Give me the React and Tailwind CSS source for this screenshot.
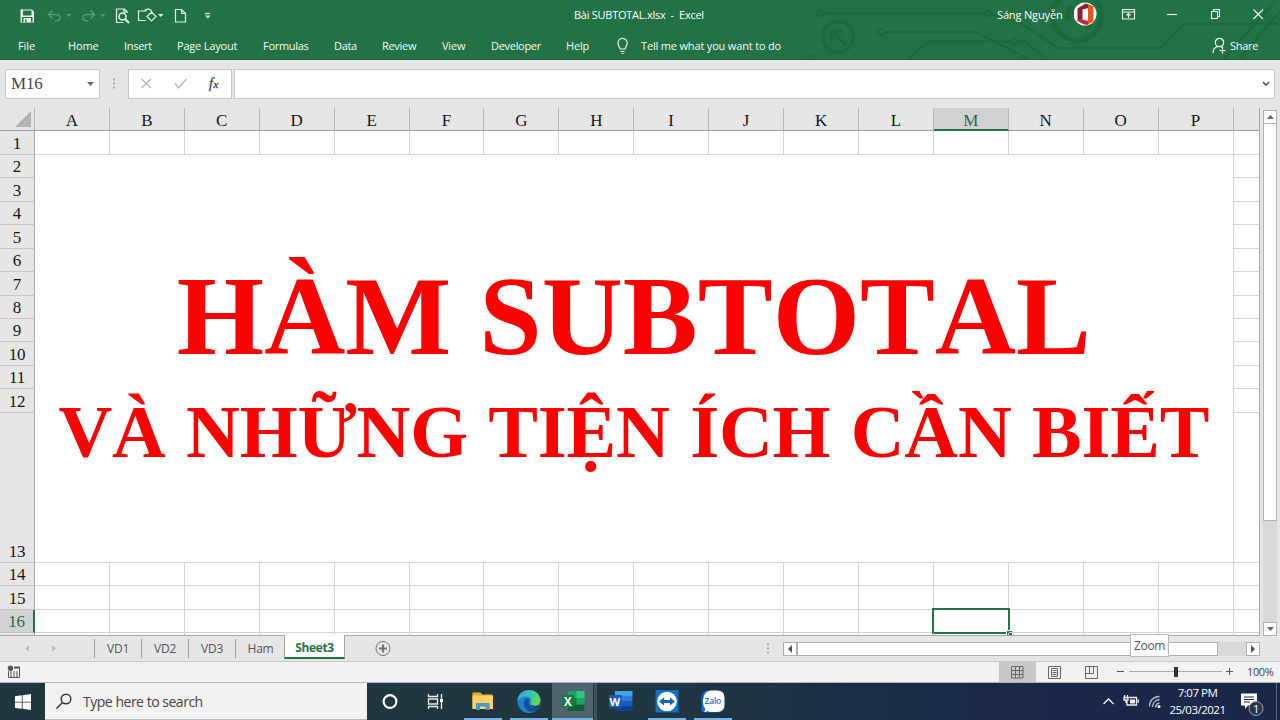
import React from 'react';

const menuTabs = [
  { label: 'File', className: 'w-[50px] tracking-[-0.1px]' },
  { label: 'Home', className: 'w-[56px] tracking-[-0.1px]' },
  { label: 'Insert', className: 'w-[53px] tracking-[-0.3px]' },
  { label: 'Page Layout', className: 'w-[86px] tracking-[-0.2px]' },
  { label: 'Formulas', className: 'w-[71px] tracking-[-0.3px]' },
  { label: 'Data', className: 'w-[48px] tracking-[-0.3px]' },
  { label: 'Review', className: 'w-[60px] tracking-[-0.3px]' },
  { label: 'View', className: 'w-[49px] tracking-[-0.2px]' },
  { label: 'Developer', className: 'w-[75px] tracking-[-0.3px]' },
  { label: 'Help', className: 'w-[50px] tracking-[-0.2px]' },
];

const columns = ['A', 'B', 'C', 'D', 'E', 'F', 'G', 'H', 'I', 'J', 'K', 'L', 'M', 'N', 'O', 'P'];
const mergedRows = [2, 3, 4, 5, 6, 7, 8, 9, 10, 11, 12];
const sheetTabs = [
  { label: 'VD1', className: 'w-[47px]' },
  { label: 'VD2', className: 'w-[47px]' },
  { label: 'VD3', className: 'w-[47px]' },
  { label: 'Ham', className: 'w-[50px]' },
];

function CircuitPattern() {
  return (
    <svg className="absolute right-0 top-0" width="480" height="60" viewBox="800 0 480 60" fill="none" stroke="#1e683f" strokeWidth="2">
      <circle cx="820.5" cy="13.5" r="3" />
      <path d="M824 13.5H984" />
      <circle cx="988" cy="13.5" r="3" />
      <circle cx="838" cy="37" r="15.5" strokeWidth="3" />
      <path d="M846 45L832 31M832 42V31H843" strokeWidth="3" />
      <circle cx="882" cy="32" r="3" />
      <path d="M886 32H976L1030 60" />
      <path d="M908 60L928 41.500H1010M1017 41.500H1024L1048 60" />
      <circle cx="1013.500" cy="41.500" r="3" />
      <path d="M991 14L1022 24L1058 48H1161L1185 24H1280" />
      <circle cx="1077" cy="16" r="24.500" strokeWidth="5" />
      <path d="M1090 28L1068 6M1068 20V6" strokeWidth="5" />
      <path d="M1223 60L1276 0M1238 60L1290 0" />
      <circle cx="811" cy="58" r="3" />
    </svg>
  );
}

function TitleBar() {
  return (
    <div className="relative flex h-[30px] text-white">
      <svg width="220" height="30" fill="none" stroke="#e3efe8" strokeWidth="1.2">
        <path fillRule="evenodd" d="M20.500 9.500h11.500l2 2v11h-13.500zM23 10.500v5h8.500v-5zM22 17v5h1.500v-4h7.500v4h1.500v-5zM25 19.500v2.500h1.500v-2.500z" fill="#e9f3ed" stroke="none" />
        <g stroke="#559976">
          <path d="M52.500 10.500l-4 4 4 4M48.500 14.500h7.500c6 0 5 7-1 6.500" strokeWidth="1.500" />
          <path d="M90.500 10.500l4 4-4 4M94.500 14.500h-7.500c-6 0-5 7 1 6.500" strokeWidth="1.500" />
        </g>
        <path d="M66 14h5.500l-2.750 3zM100 14h5.500l-2.750 3z" fill="#559976" stroke="none" />
        <path d="M127 13v-1.500l-2.500-2.500h-8v13.500h7M124 9v3h3" />
        <circle cx="122.500" cy="16.500" r="3.500" strokeWidth="1.600" />
        <path d="M125 19l4 4" strokeWidth="2" />
        <path d="M146 20.500h-7.500v-9.500h8M144.500 11c2-3.500 8-2 7.500 3M147 16.500l4.500-4.500 4.500 4.500-4.500 4.500z" />
        <path d="M158 14h5.500l-2.750 3z" fill="#e3efe8" stroke="none" />
        <path d="M175.500 9.500h6l4 4v8.500h-10zM181.500 9.500v4h4" />
        <path d="M205 13.500h5" />
        <path d="M205 15.500h5.500l-2.750 3z" fill="#e3efe8" stroke="none" />
      </svg>
      <div className="ml-[354px] w-[423px] whitespace-pre pt-[7px] text-[11px] leading-4 tracking-[-0.26px]">
        Bài SUBTOTAL.xlsx  -  Excel
      </div>
      <div className="w-[77px] whitespace-nowrap pt-[7px] text-[11px] leading-4 tracking-[-0.15px]">Sáng Nguyễn</div>
      <svg width="206" height="30" viewBox="1074 0 206 30" fill="none" stroke="#f2f7f4" strokeWidth="1.100">
        <circle cx="1085" cy="14" r="11.500" fill="#fff" stroke="none" />
        <path d="M1077.500 8.500l8-5 3 1v3.500l-6 1.500v10l-5 2z" fill="#8f1f35" stroke="none" />
        <path d="M1088 4l5.500 2.500v15l-5.500 3z" fill="#e2571b" stroke="none" />
        <path d="M1077.500 21l5-1.500 5.500 1.500v4l-4-0.500z" fill="#b92b3f" stroke="none" />
        <path d="M1122.500 9.500h12v9.500h-12zM1122.500 12h12M1128.500 18v-4.500M1126.500 15.500l2-2 2 2" />
        <path d="M1167 14.500h10" />
        <path d="M1211.500 11.500h6v7h-6zM1213.500 11.500v-2h6v7h-2" />
        <path d="M1253.500 9.500l9.500 9.500M1263 9.500l-9.500 9.500" />
      </svg>
    </div>
  );
}

function MenuBar() {
  return (
    <div className="relative flex h-[30px] items-center border-b border-[#1b5e3a] pl-[18px] pt-[3px] text-[11px] text-[#f4faf6]">
      {menuTabs.map((tab) => (
        <div key={tab.label} className={`whitespace-nowrap ${tab.className}`}>{tab.label}</div>
      ))}
      <svg className="mr-[10px]" width="15" height="20" fill="none" stroke="#e8f3ec" strokeWidth="1.200">
        <path d="M4 13c0-2-2-3-2-6a4.600 4.600 0 0 1 9.200 0c0 3-2 4-2 6zM4.500 15.500h4M5.500 17.500h2" />
      </svg>
      <div className="w-[571px] whitespace-nowrap tracking-[-0.17px]">Tell me what you want to do</div>
      <svg width="18" height="18" fill="none" stroke="#f4faf6" strokeWidth="1.200">
        <circle cx="7.500" cy="5.500" r="4.200" />
        <path d="M1 16c0-4 2-6 5-6.500M9 9.500l2 1.500M7.500 13.500h6M10.500 10.500v6" />
      </svg>
      <div className="tracking-[-0.3px]">Share</div>
    </div>
  );
}

function FormulaBar() {
  return (
    <div className="flex h-[48px] bg-[#e6e6e6] pl-[5px] pt-[9px]">
      <div className="flex h-[30px] w-[95px] items-center justify-between border border-[#c8c8c8] bg-white pl-[5px] pr-[5px]">
        <span className="font-['Liberation_Serif'] text-[17px] tracking-[-0.2px] text-[#444]">M16</span>
        <svg width="7" height="4" fill="#666"><path d="M0 0h7l-3.500 4z" /></svg>
      </div>
      <svg width="28" height="30" fill="#aaa">
        <path d="M13 9.500h2v2h-2zM13 13.500h2v2h-2zM13 17.500h2v2h-2z" />
      </svg>
      <div className="h-[30px] w-[104px] border border-[#c8c8c8] bg-white">
        <svg width="102" height="28" fill="none" stroke="#b5b5b5" strokeWidth="1.400">
          <path d="M12.500 9l9.500 9M22 9l-9.500 9M46 13.500l3.500 4.500 8-9" />
          <text x="80" y="17.500" fontFamily="Liberation Serif" fontStyle="italic" fontSize="14" fill="#444" stroke="#444" strokeWidth="0.300">f</text>
          <text x="84.500" y="17.500" fontFamily="Liberation Serif" fontStyle="italic" fontSize="11" fill="#444" stroke="#444" strokeWidth="0.300">x</text>
        </svg>
      </div>
      <div className="ml-[2px] flex h-[30px] w-[1041px] items-center justify-end border border-[#c8c8c8] bg-white pr-1">
        <svg width="8" height="6" fill="none" stroke="#555" strokeWidth="1.600"><path d="M1 1l3 3 3-3" /></svg>
      </div>
    </div>
  );
}

function RowHeader({ n, active }) {
  return (
    <div
      className={`flex h-full w-[35px] shrink-0 items-end justify-center border-b border-r text-[17px] leading-[21px] tracking-[-0.2px] ${
        active
          ? 'border-b-[#c0c0c0] border-r-2 border-r-[#217346] bg-[#d2d2d2] text-[#2c6b48]'
          : 'border-b-[#c6c6c6] border-r-[#a8a8a8] bg-[#e6e6e6] text-[#161616]'
      }`}
    >
      {n}
    </div>
  );
}

function GridRow({ n, className = 'h-[23.43px]', activeRow }) {
  return (
    <div className={`flex shrink-0 ${className}`}>
      <RowHeader n={n} active={activeRow} />
      {columns.map((col) => (
        <div key={col} className="relative w-[74.920px] shrink-0 border-b border-r border-[#d4d4d4]">
          {activeRow && col === 'M' && (
            <div className="absolute -left-[2px] -top-[2px] h-[26px] w-[78px] border-2 border-[#217346]">
              <div className="absolute -bottom-[4px] -right-[4px] h-[6px] w-[6px] border-l border-t border-white bg-[#217346]" />
            </div>
          )}
        </div>
      ))}
      <div className="flex-1 border-b border-[#d4d4d4]" />
    </div>
  );
}

function Sheet() {
  return (
    <div className="flex h-[528px] bg-[#e6e6e6]">
      <div className="flex w-[1260px] flex-col overflow-hidden border-b border-r border-[#a6a6a6] bg-white font-['Liberation_Serif']">
        <div className="flex h-[23px] shrink-0 border-b border-[#a0a0a0] bg-[#e6e6e6] text-[17px] leading-[25px]">
          <div className="flex w-[35px] items-end justify-end border-r border-[#b8b8b8] pb-[3px] pr-[3px]">
            <svg width="16" height="16" fill="#b4b4b4"><path d="M16 0v16H0z" /></svg>
          </div>
          {columns.map((col) => (
            <div
              key={col}
              className={`w-[74.920px] shrink-0 border-r border-[#b8b8b8] text-center ${
                col === 'M' ? 'h-[23px] border-b-2 border-b-[#217346] bg-[#d2d2d2] text-[#2c6b48]' : 'text-[#161616]'
              }`}
            >
              {col}
            </div>
          ))}
        </div>
        <GridRow n={1} className="h-[24px]" />
        <div className="flex h-[407.700px] shrink-0">
          <div className="flex flex-col">
            {mergedRows.map((n) => (
              <div key={n} className="h-[23.43px]">
                <RowHeader n={n} />
              </div>
            ))}
            <div className="h-[150px]">
              <RowHeader n={13} />
            </div>
          </div>
          <div className="flex w-[1198.700px] flex-col items-center border-b border-r border-[#d4d4d4] pt-[99px] font-bold whitespace-nowrap text-[#ff0000] [font-kerning:none]">
            <div className="h-[124px] text-[112.300px] leading-[124px]">HÀM SUBTOTAL</div>
            <div className="mt-[11px] h-[86px] text-[74.500px] leading-[86px] tracking-[-0.2px] [word-spacing:2px]">VÀ NHỮNG TIỆN ÍCH CẦN BIẾT</div>
          </div>
          <div className="flex flex-1 flex-col">
            {mergedRows.map((n) => (
              <div key={n} className="h-[23.43px] border-b border-[#d4d4d4]" />
            ))}
            <div className="h-[150px] border-b border-[#d4d4d4]" />
          </div>
        </div>
        <GridRow n={14} />
        <GridRow n={15} />
        <GridRow n={16} activeRow />
        <GridRow n="" className="h-[10px]" />
      </div>
      <div className="flex w-[20px] flex-col pl-[3px] pt-[2px]">
        <div className="flex h-[14px] w-[14px] items-center justify-center border border-[#b0b0b0] bg-white">
          <svg width="7" height="4" fill="#666"><path d="M0 4h7l-3.500-4z" /></svg>
        </div>
        <div className="h-[398px] w-[14px] border border-t-0 border-[#b0b0b0] bg-white" />
        <div className="h-[101px] w-[14px] bg-[#d9d9d9]" />
        <div className="flex h-[14px] w-[14px] items-center justify-center border border-[#b0b0b0] bg-white">
          <svg width="7" height="4" fill="#666"><path d="M0 0h7l-3.500 4z" /></svg>
        </div>
      </div>
    </div>
  );
}

function SheetTabs() {
  return (
    <div className="relative flex h-[26px] border-b border-[#c9c9c9] bg-[#e6e6e6] text-[12px] text-[#555]">
      <svg width="94" height="25" fill="#bdbdbd">
        <path d="M29 9v7l-4-3.500zM52 9v7l4-3.500z" />
      </svg>
      {sheetTabs.map((tab) => (
        <div key={tab.label} className={`mt-[3px] h-[19px] border-l border-[#a0a0a0] text-center leading-[19px] tracking-[-0.2px] ${tab.className}`}>
          {tab.label}
        </div>
      ))}
      <div className="-ml-px -mt-px h-[24px] w-[61px] border-x border-b-2 border-x-[#a6a6a6] border-b-[#217346] bg-white text-center font-bold leading-[26px] tracking-[-0.4px] text-[#217346]">
        Sheet3
      </div>
      <svg className="ml-[30px]" width="16" height="25" fill="none" stroke="#757575">
        <circle cx="8" cy="12.500" r="7" />
        <path d="M4 12.500h8M8 8.500v8" strokeWidth="2" />
      </svg>
      <svg className="ml-[376px]" width="4" height="25" fill="#aaa">
        <path d="M0 7.500h2v2h-2zM0 11.500h2v2h-2zM0 15.500h2v2h-2z" />
      </svg>
      <div className="ml-[12px] mt-[6px] flex h-[14px] w-[14px] items-center justify-center border border-[#b0b0b0] bg-white">
        <svg width="4" height="8" fill="#555"><path d="M4 0v8l-4-4z" /></svg>
      </div>
      <div className="mt-[6px] h-[14px] w-[421px] border border-[#b0b0b0] bg-white" />
      <div className="mt-[6px] h-[14px] w-[28px] bg-[#d9d9d9]" />
      <div className="mt-[6px] flex h-[14px] w-[14px] items-center justify-center border border-[#b0b0b0] bg-white">
        <svg width="4" height="8" fill="#555"><path d="M0 0v8l4-4z" /></svg>
      </div>
      <div className="absolute left-[1130px] -top-[2px] h-[23px] w-[39px] border border-[#b8b8b8] bg-white text-center leading-[21px] tracking-[-0.3px]">
        Zoom
      </div>
    </div>
  );
}

function StatusBar() {
  return (
    <div className="flex h-[21px] items-center justify-between border-b border-[#b5b5b5] bg-[#f2f2f2] text-[11px] text-[#444]">
      <svg className="ml-[7px]" width="14" height="14" fill="none" stroke="#555">
        <path d="M1.500 6v6.500h11v-10h-5" />
        <path d="M7 2.500h6" strokeWidth="2" />
        <path d="M3 7h8M3 9h8M3 11h8" strokeDasharray="2 1" />
        <circle cx="3.500" cy="3.200" r="2.700" fill="#555" stroke="none" />
      </svg>
      <div className="flex h-full items-center">
        <div className="flex h-full w-[37px] items-center justify-center bg-[#c8c8c8]">
          <svg width="13" height="13" fill="none" stroke="#666">
            <path d="M0.500 0.500h11.500v11.500h-11.500zM4.500 0v12M8.500 0v12M0 4.500h12M0 8.500h12" />
          </svg>
        </div>
        <svg className="ml-[12px]" width="51" height="13" fill="none" stroke="#666">
          <path d="M0.500 0.500h12v12h-12zM3.500 2.500h6v8h-6zM4.500 4.500h4M4.500 6.500h4M4.500 8.500h4" />
          <path d="M37.500 0.500h12v12h-12zM37.500 7.500h8v-7M41.500 0.500v7" />
        </svg>
        <svg className="ml-[17px]" width="122" height="20" fill="none" stroke="#555">
          <path d="M1 9.500h7M110 9.500h7M113.500 6v7" />
          <path d="M13 9.500h93" stroke="#aaa" />
          <path d="M58 5h4v10h-4z" fill="#333" stroke="none" />
        </svg>
        <div className="w-[42px] pl-[9px] tracking-[-0.4px]">100%</div>
      </div>
    </div>
  );
}

function AppButton({ running, active, className, children }) {
  return (
    <div className={`flex h-full flex-col items-center ${active ? 'bg-[#50646d]' : ''} ${className}`}>
      <svg width="24" height="35" viewBox="0 0 24 35">{children}</svg>
      {running && <div className={`h-[2px] bg-[#76b4e8] ${active ? 'w-full' : 'w-[38px]'}`} />}
    </div>
  );
}

function Taskbar() {
  return (
    <div className="flex h-[37px] bg-linear-to-r from-[#203740] from-50% to-[#1b2748] to-82% text-white">
      <div className="flex w-[45px] items-center justify-center">
        <svg width="16" height="16" fill="#fff">
          <path d="M0 2.300l6.800-1v6.400H0zM7.600 1.200L16 0v7.700H7.600zM0 8.500h6.800v6.300L0 13.900zM7.600 8.500H16V16l-8.400-1.200z" />
        </svg>
      </div>
      <div className="flex w-[322px] items-center border-b border-[#bbb] bg-[#f2f2f2] pl-[11px] text-[#444]">
        <svg width="17" height="17" fill="none" stroke="#333" strokeWidth="1.400">
          <circle cx="10" cy="6" r="4.800" />
          <path d="M6.500 9.500l-6 6" />
        </svg>
        <span className="ml-[10px] whitespace-nowrap text-[14px] tracking-[-0.48px]">Type here to search</span>
      </div>
      <AppButton className="w-[46px]">
        <circle cx="12" cy="18.500" r="6.400" fill="none" stroke="#fff" strokeWidth="2.200" />
      </AppButton>
      <AppButton className="w-[45px]">
        <g fill="none" stroke="#e8edef" strokeWidth="1.300">
          <path d="M4.500 11v2.500h9v-2.500M4.500 26v-2.500h9v2.500M4.500 16h9v5h-9zM17.500 11v15" />
          <path d="M16 16h3v3h-3z" fill="#fff" stroke="none" />
        </g>
      </AppButton>
      <AppButton className="w-[49px]" running>
        <path d="M1.500 9.500h8l2 2h10v14h-20z" fill="#e9ab2c" />
        <path d="M1.500 12.500h20.500v13.500h-20.500z" fill="#fbd160" />
        <path d="M5 27v-7h13.500v7h-4v-3.500h-5.500v3.500z" fill="#4a97c9" />
      </AppButton>
      <AppButton className="w-[43px]" running>
        <defs>
          <linearGradient id="edge" x1="0" y1="0" x2="1" y2="0.300">
            <stop offset="0" stopColor="#2aa7dd" />
            <stop offset="0.600" stopColor="#35c6b5" />
            <stop offset="1" stopColor="#67d84e" />
          </linearGradient>
        </defs>
        <circle cx="12" cy="18.500" r="11.500" fill="#1a80cf" />
        <path d="M0.500 18C1 4 22 3 23.500 17c0 6-7 6.500-9.500 4.500-1.500-1.500 0-2 0-4 0-5-8-6-13.500 0.500z" fill="url(#edge)" />
        <path d="M9 15.500c-4 4-2 12 5 13.500 4 0 7-2.500 8-5-6 3-12-0.500-10-7.500z" fill="#174f95" />
        <path d="M13 18c-1 2-0.500 3 1 4 2 1.500 6 1.500 9 0l-1 2.300c-5 2-10.500-1.300-9-6.300z" fill="#203740" />
      </AppButton>
      <div className="w-[2px]" />
      <AppButton className="w-[41px]" running active>
        <path d="M7 8h16.500v20H7z" fill="#21a366" />
        <path d="M15.500 8h8v7h-8z" fill="#33c481" />
        <path d="M7 15h8.500v6.500H7z" fill="#107c41" />
        <path d="M7 21.500h16.500V28H7z" fill="#185c37" />
        <path d="M1 12h12v12.500H1z" fill="#107c41" />
        <text x="3" y="22.500" fontFamily="Open Sans" fontWeight="bold" fontSize="11.500" fill="#fff">X</text>
      </AppButton>
      <div className="ml-px w-[3px] bg-[#3d525c]" />
      <AppButton className="w-[47px]">
        <path d="M6 8h17.500v5H6z" fill="#41a5ee" />
        <path d="M6 13h17.500v5H6z" fill="#2b7cd3" />
        <path d="M6 18h17.500v5H6z" fill="#185abd" />
        <path d="M6 23h17.500v5H6z" fill="#103f91" />
        <path d="M0 12h12.500v12.500H0z" fill="#185abd" />
        <text x="0.500" y="22.500" fontFamily="Open Sans" fontWeight="bold" fontSize="11" fill="#fff">W</text>
      </AppButton>
      <AppButton className="w-[45px]" running>
        <path d="M0.500 7h23v22.500h-23z" fill="#0e70c9" />
        <circle cx="12" cy="18.500" r="9.800" fill="#fff" />
        <path d="M4 18.500l5-4v2.500h6v-2.500l5 4-5 4v-2.500h-6v2.500z" fill="#0e64b8" />
      </AppButton>
      <AppButton className="w-[47px]" running>
        <path d="M8 7.500h8q7 0 7 7v8q0 7-7 7H3q-2.500 0-2.500-2.500V14.500q0-7 7.500-7z" fill="#1665d8" />
        <path d="M11 7.500h5q7.500 0 7.500 7v7.500q0 7-7.500 7H11q-3 0-4.500-1-1 1.200-3.500 1 1.500-1.500 1-3.500-2-2.500-2-6 0-12 9-12z" fill="#fff" />
        <text x="3.500" y="21" fontFamily="Open Sans" fontWeight="600" fontSize="8.500" letterSpacing="-0.200" fill="#2a72c8">Zalo</text>
      </AppButton>
      <div className="ml-auto flex">
        <svg width="64" height="37" viewBox="1102 683 64 37" fill="none" stroke="#f2f2f2" strokeWidth="1.300">
          <path d="M1103.500 704l5-5 5 5" />
          <path d="M1129 697.500h7.500v7.500h-9.500v-4M1138.200 699.500v3.500M1124.500 695v2M1127.500 695v2M1124 697.500h4v2.500h-4zM1126 700v3" />
          <path d="M1130 699.500h5v4h-5z" fill="#f2f2f2" stroke="none" />
          <g stroke="#b5bdca">
            <path d="M1149.500 706.500c0-6 4-10 10-10M1152.500 707c0-4 3-7 7-7.500M1155.500 707.500c0-2.500 1.500-4 4-4.500" />
          </g>
          <circle cx="1159" cy="706.500" r="1.500" fill="#fff" stroke="none" />
        </svg>
        <div className="w-[63px] pt-px text-center text-[11.500px] leading-[17px] tracking-[-0.5px] whitespace-nowrap">
          <div>7:07 PM</div>
          <div>25/03/2021</div>
        </div>
        <svg width="51" height="37" viewBox="1229 683 51 37">
          <path d="M1241 693.500h16v12h-9l-3 3.500v-3.500h-4z" fill="#fff" />
          <path d="M1244 697h10M1244 699.500h10M1244 702h6" stroke="#1b2748" />
          <circle cx="1256" cy="708.500" r="7" fill="#2b3550" stroke="#99a1b0" />
          <text x="1253" y="712.500" fontFamily="Open Sans" fontSize="11" fill="#fff">1</text>
          <path d="M1276.500 683v37" stroke="#5d667c" />
        </svg>
      </div>
    </div>
  );
}

export default function App() {
  return (
    <div className="h-[720px] w-[1280px] overflow-hidden bg-[#e6e6e6] font-['Open_Sans',sans-serif]">
      <div className="relative bg-[#217346]">
        <CircuitPattern />
        <TitleBar />
        <MenuBar />
      </div>
      <FormulaBar />
      <Sheet />
      <SheetTabs />
      <StatusBar />
      <Taskbar />
    </div>
  );
}
